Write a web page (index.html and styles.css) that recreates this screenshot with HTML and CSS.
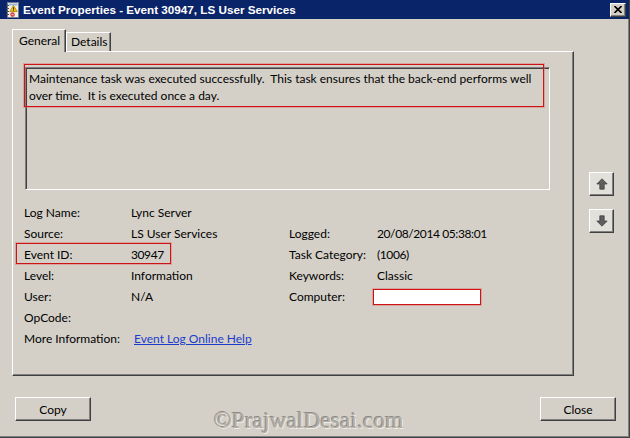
FILE: index.html
```html
<!DOCTYPE html>
<html>
<head>
<meta charset="utf-8">
<link rel="stylesheet" href="styles.css">
</head>
<body>
<div class="window">
  <div class="titlebar">
    <svg class="app-icon" width="16" height="16" viewBox="0 0 16 16">
      <rect x="3.5" y="0.5" width="11" height="15" fill="#f3f0e2" stroke="#6f7c99"/>
      <rect x="4.5" y="1.5" width="9" height="2" fill="#9fb3d6"/>
      <g fill="#4a4a4a">
        <rect x="2" y="3" width="3" height="1"/>
        <rect x="2" y="6" width="3" height="1"/>
        <rect x="2" y="9" width="3" height="1"/>
        <rect x="2" y="12" width="3" height="1"/>
      </g>
      <path d="M9.5 3.5 L13.3 9.5 L5.7 9.5 Z" fill="#f4c400" stroke="#a27a00" stroke-width="0.7"/>
      <rect x="9.1" y="5.3" width="0.9" height="2.4" fill="#222"/>
      <rect x="9.1" y="8.2" width="0.9" height="0.8" fill="#222"/>
      <circle cx="8.5" cy="12.6" r="2.3" fill="#d2404a"/>
      <rect x="7.3" y="12.1" width="2.4" height="1" fill="#f0c0c0"/>
    </svg>
    <span class="title">Event Properties - Event 30947, LS User Services</span>
    <div class="title-close">
      <svg width="8" height="7" viewBox="0 0 8 7">
        <path d="M0.5 0 L7.5 7 M7.5 0 L0.5 7" stroke="#000" stroke-width="1.6"/>
      </svg>
    </div>
  </div>
  <div class="client">
    <div class="main">
      <div class="tabctl">
        <div class="tabs">
          <div class="tab active">General</div>
          <div class="tab">Details</div>
        </div>
        <div class="panel">
          <div class="msgbox">
            <div class="msgtext">Maintenance task was executed successfully.  This task ensures that the back-end performs well over time.  It is executed once a day.</div>
            <div class="annot annot-msg"></div>
          </div>
          <div class="fields">
            <div>Log Name:</div><div>Lync Server</div><div></div><div></div>
            <div>Source:</div><div>LS User Services</div><div>Logged:</div><div class="num">20/08/2014 05:38:01</div>
            <div>Event ID:</div><div class="num">30947</div><div>Task Category:</div><div class="num">(1006)</div>
            <div>Level:</div><div>Information</div><div>Keywords:</div><div>Classic</div>
            <div>User:</div><div>N/A</div><div>Computer:</div><div><span class="redacted"></span></div>
            <div>OpCode:</div><div></div><div></div><div></div>
            <div>More Information:</div><div class="span3"><a class="link" href="#">Event Log Online Help</a></div>
            <div class="annot annot-id"></div>
          </div>
        </div>
      </div>
      <div class="nav">
        <div class="btn nav-btn">
          <svg width="12" height="12" viewBox="0 0 12 12"><path d="M6 0.8 L11.2 6 L8.2 6 L8.2 11.2 L3.8 11.2 L3.8 6 L0.8 6 Z" fill="#5e5e5e" stroke="#3a3a3a" stroke-width="0.7"/></svg>
        </div>
        <div class="btn nav-btn">
          <svg width="12" height="12" viewBox="0 0 12 12"><path d="M6 11.2 L11.2 6 L8.2 6 L8.2 0.8 L3.8 0.8 L3.8 6 L0.8 6 Z" fill="#5e5e5e" stroke="#3a3a3a" stroke-width="0.7"/></svg>
        </div>
      </div>
    </div>
    <div class="buttons">
      <div class="btn push">Copy</div>
      <div class="btn push">Close</div>
    </div>
  </div>
  <div class="watermark">©PrajwalDesai.com</div>
</div>
</body>
</html>
```
FILE: styles.css
```css
html, body {
  margin: 0;
  padding: 0;
  width: 630px;
  height: 438px;
  overflow: hidden;
  background: #d4d0c8;
}
body {
  font-family: Lato, "Noto Sans", sans-serif;
  font-size: 12px;
  color: #000;
}
.window {
  position: relative;
  box-sizing: border-box;
  width: 630px;
  height: 438px;
  border-right: 1px solid #404040;
  border-bottom: 1px solid #404040;
  box-shadow: inset -1px -1px 0 #808080;
  display: flex;
  flex-direction: column;
}
.titlebar {
  height: 19px;
  background: #0a246a;
  display: flex;
  align-items: center;
  color: #fff;
  flex: none;
}
.app-icon {
  margin-left: 4px;
  flex: none;
}
.title {
  margin-left: 3px;
  font-family: "Liberation Sans", Arial, sans-serif;
  font-weight: bold;
  font-size: 11.7px;
  white-space: nowrap;
}
.title-close {
  margin-left: auto;
  margin-right: 3px;
  box-sizing: border-box;
  width: 16px;
  height: 14px;
  background: #d4d0c8;
  border-top: 1px solid #fff;
  border-left: 1px solid #fff;
  border-right: 1px solid #404040;
  border-bottom: 1px solid #404040;
  box-shadow: inset -1px -1px 0 #808080;
  display: flex;
  align-items: center;
  justify-content: center;
}
.client {
  flex: 1;
  display: flex;
  flex-direction: column;
}
.main {
  display: flex;
  margin-top: 10px;
  padding-left: 12px;
}
.tabctl {
  width: 562px;
  flex: none;
}
.tabs {
  display: flex;
  align-items: flex-end;
  height: 22px;
}
.tab {
  box-sizing: border-box;
  height: 19px;
  line-height: 18px;
  padding: 0 5px 0 4px;
  border-top: 1px solid #fff;
  border-left: 1px solid #fff;
  border-right: 1px solid #404040;
  box-shadow: inset -1px 0 0 #808080;
  width: 45px;
  white-space: nowrap;
}
.tab.active {
  position: relative;
  z-index: 1;
  height: 23px;
  line-height: 21px;
  width: 54px;
  padding-left: 6px;
  margin-bottom: -1px;
  background: #d4d0c8;
}
.panel {
  box-sizing: border-box;
  height: 325px;
  border-top: 1px solid #fff;
  border-left: 1px solid #fff;
  border-right: 1px solid #404040;
  border-bottom: 1px solid #404040;
  box-shadow: inset -1px -1px 0 #808080;
  padding: 15px 0 0 11px;
}
.msgbox {
  position: relative;
  box-sizing: border-box;
  margin-left: 1px;
  width: 525px;
  height: 123px;
  border-top: 1px solid #808080;
  border-left: 1px solid #808080;
  border-right: 1px solid #fff;
  border-bottom: 1px solid #fff;
  box-shadow: inset 1px 1px 0 #404040;
  padding: 3px 3px 1px;
}
.msgtext {
  white-space: pre-wrap;
  line-height: 16.5px;
}
.annot {
  position: absolute;
  box-sizing: border-box;
  border: 1px solid #cc1414;
  box-shadow: 0 0 0 1px rgba(225, 110, 110, 0.45);
}
.annot-msg {
  left: -2px;
  top: -4px;
  width: 520px;
  height: 43px;
}
.fields {
  position: relative;
  margin-top: 12px;
  display: grid;
  grid-template-columns: 107px 158px 88px 1fr;
  grid-auto-rows: 21px;
  align-items: center;
  white-space: nowrap;
}
.num {
  letter-spacing: -0.4px;
}
.span3 {
  grid-column: span 3;
}
.annot-id {
  left: -8px;
  top: 41px;
  width: 155px;
  height: 21px;
}
.redacted {
  display: block;
  box-sizing: border-box;
  margin-left: -4px;
  width: 108px;
  height: 16px;
  margin-top: 1px;
  background: #fff;
  border: 1px solid #cc1414;
  box-shadow: 0 0 0 1px rgba(225, 110, 110, 0.45);
}
.link {
  margin-left: 3px;
  color: #1a3ccc;
  text-decoration: underline;
}
.nav {
  margin-left: 15px;
  padding-top: 143px;
  display: flex;
  flex-direction: column;
  gap: 13px;
}
.btn {
  box-sizing: border-box;
  background: #d4d0c8;
  border-top: 1px solid #fff;
  border-left: 1px solid #fff;
  border-right: 1px solid #404040;
  border-bottom: 1px solid #404040;
  box-shadow: inset -1px -1px 0 #808080;
  display: flex;
  align-items: center;
  justify-content: center;
}
.nav-btn {
  width: 25px;
  height: 24px;
  background: #e2e0da;
}
.buttons {
  display: flex;
  justify-content: space-between;
  margin-top: 21px;
  padding: 0 13px 0 15px;
}
.push {
  width: 76px;
  height: 24px;
}
.watermark {
  position: absolute;
  left: 214px;
  top: 409px;
  font-family: "Liberation Serif", "Times New Roman", serif;
  font-size: 23.5px;
  line-height: 23.5px;
  color: #b3afa7;
  text-shadow: -1px -1px 0 #8e8a84, 1px 1px 0 #eeece6;
  white-space: nowrap;
}
```
